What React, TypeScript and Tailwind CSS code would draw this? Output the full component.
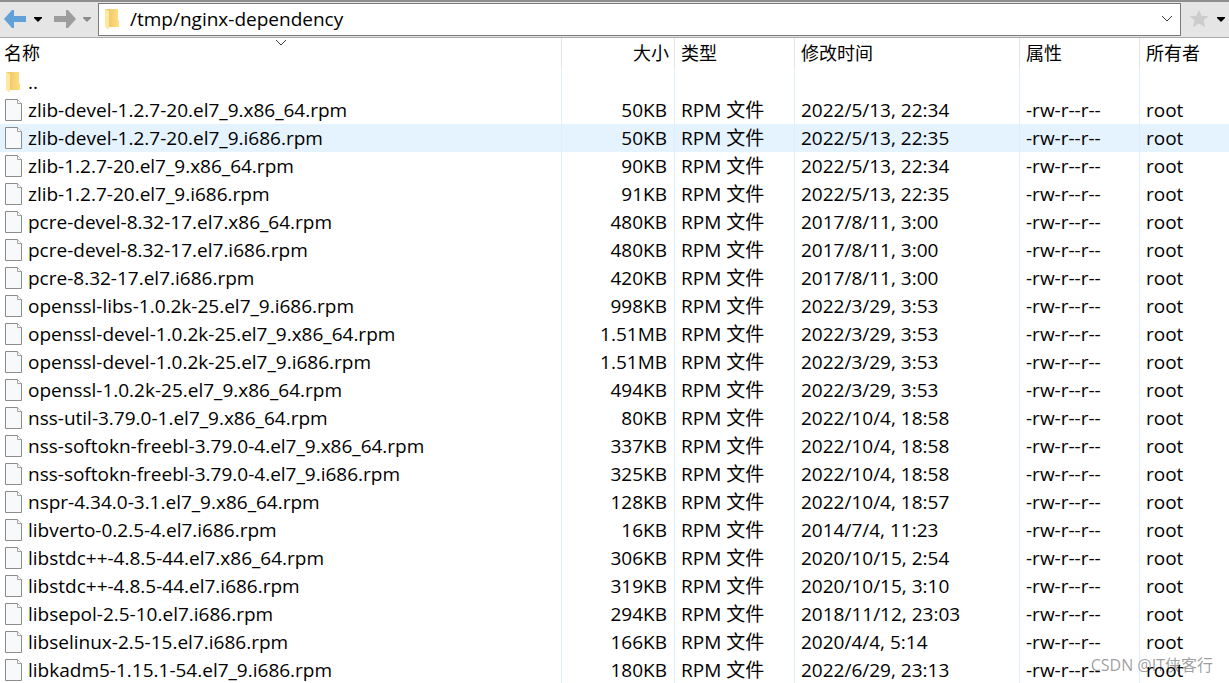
import React from 'react';

interface RemoteFile {
  name: string;
  size: string;
  modified: string;
}

const files: RemoteFile[] = [
  { name: 'zlib-devel-1.2.7-20.el7_9.x86_64.rpm', size: '50KB', modified: '2022/5/13, 22:34' },
  { name: 'zlib-devel-1.2.7-20.el7_9.i686.rpm', size: '50KB', modified: '2022/5/13, 22:35' },
  { name: 'zlib-1.2.7-20.el7_9.x86_64.rpm', size: '90KB', modified: '2022/5/13, 22:34' },
  { name: 'zlib-1.2.7-20.el7_9.i686.rpm', size: '91KB', modified: '2022/5/13, 22:35' },
  { name: 'pcre-devel-8.32-17.el7.x86_64.rpm', size: '480KB', modified: '2017/8/11, 3:00' },
  { name: 'pcre-devel-8.32-17.el7.i686.rpm', size: '480KB', modified: '2017/8/11, 3:00' },
  { name: 'pcre-8.32-17.el7.i686.rpm', size: '420KB', modified: '2017/8/11, 3:00' },
  { name: 'openssl-libs-1.0.2k-25.el7_9.i686.rpm', size: '998KB', modified: '2022/3/29, 3:53' },
  { name: 'openssl-devel-1.0.2k-25.el7_9.x86_64.rpm', size: '1.51MB', modified: '2022/3/29, 3:53' },
  { name: 'openssl-devel-1.0.2k-25.el7_9.i686.rpm', size: '1.51MB', modified: '2022/3/29, 3:53' },
  { name: 'openssl-1.0.2k-25.el7_9.x86_64.rpm', size: '494KB', modified: '2022/3/29, 3:53' },
  { name: 'nss-util-3.79.0-1.el7_9.x86_64.rpm', size: '80KB', modified: '2022/10/4, 18:58' },
  { name: 'nss-softokn-freebl-3.79.0-4.el7_9.x86_64.rpm', size: '337KB', modified: '2022/10/4, 18:58' },
  { name: 'nss-softokn-freebl-3.79.0-4.el7_9.i686.rpm', size: '325KB', modified: '2022/10/4, 18:58' },
  { name: 'nspr-4.34.0-3.1.el7_9.x86_64.rpm', size: '128KB', modified: '2022/10/4, 18:57' },
  { name: 'libverto-0.2.5-4.el7.i686.rpm', size: '16KB', modified: '2014/7/4, 11:23' },
  { name: 'libstdc++-4.8.5-44.el7.x86_64.rpm', size: '306KB', modified: '2020/10/15, 2:54' },
  { name: 'libstdc++-4.8.5-44.el7.i686.rpm', size: '319KB', modified: '2020/10/15, 3:10' },
  { name: 'libsepol-2.5-10.el7.i686.rpm', size: '294KB', modified: '2018/11/12, 23:03' },
  { name: 'libselinux-2.5-15.el7.i686.rpm', size: '166KB', modified: '2020/4/4, 5:14' },
  { name: 'libkadm5-1.15.1-54.el7_9.i686.rpm', size: '180KB', modified: '2022/6/29, 23:13' },
];

const HOVERED = 1;

const FolderIcon = () => (
  <svg className="w-4 h-6 shrink-0" viewBox="0 0 16 24" aria-hidden="true">
    <defs>
      <linearGradient id="folder-body">
        <stop offset="0.3" stopColor="#f0cb6c" />
        <stop offset="1" stopColor="#ffdf80" />
      </linearGradient>
    </defs>
    <path d="M1 2H14V13L15 14V20H5Z" fill="url(#folder-body)" />
    <path d="M1 2L5 4V22L4 22.500L1 20Z" fill="#ffe8a2" />
  </svg>
);

const FileIcon = () => (
  <svg className="w-[18px] h-6 shrink-0" viewBox="0 0 18 24" aria-hidden="true">
    <path d="M1.500 1.500H13.500L17.500 5.500V22.500H1.500Z" fill="#f7f9fa" stroke="#8c8c8c" />
    <path d="M13.500 1.500V5.500H17.500" fill="#ffffff" stroke="#a0a0a0" />
  </svg>
);

const ArrowIcon = ({ flip = false }: { flip?: boolean }) => (
  <svg className={flip ? 'w-6 h-5 rotate-180' : 'w-6 h-5'} viewBox="0 0 24 20" fill="currentColor" aria-hidden="true">
    <path d="M1 10L9 1H11V7H23V13H11V19H9Z" />
  </svg>
);

const Caret = () => (
  <svg className="w-2 h-5" viewBox="0 0 8 20" fill="currentColor" aria-hidden="true">
    <path d="M0 8H8V9L4 13L0 9Z" />
  </svg>
);

const Chevron = () => (
  <svg className="w-3 h-2" viewBox="0 0 12 8" fill="none" stroke="#404040" aria-hidden="true">
    <path d="M1 1L6 6L11 1" />
  </svg>
);

const th = 'h-[30px] p-0 font-normal text-left border-r border-[#e5e5e5] px-[6px] whitespace-nowrap';
const td = 'h-7 p-0 border-r border-[#d9ebfa]/80 pl-[6px] pr-[7px] whitespace-nowrap';

export default function App() {
  return (
    <div className="relative h-screen flex flex-col overflow-hidden bg-white text-black text-[19px] leading-7 font-['Open_Sans','Noto_Sans_CJK_SC',sans-serif]">
      {/* Toolbar */}
      <header className="flex items-center shrink-0 h-[38px] border-t-2 border-t-[#8e8e8e] border-b border-b-[#ababab] bg-[#e5e5e5]">
        <div className="flex items-center w-[98px] shrink-0 pl-[3px] pb-[2px]">
          <button aria-label="Back" className="text-[#62a1d8]"><ArrowIcon /></button>
          <button aria-label="Back history" className="ml-[7px]"><Caret /></button>
          <button aria-label="Forward" className="ml-[11px] text-[#9d9d9d]"><ArrowIcon flip /></button>
          <button aria-label="Forward history" className="ml-[6px] text-[#8a8a8a]"><Caret /></button>
        </div>
        <div className="flex flex-1 items-center h-[33px] border border-[#7a7a7a] bg-white pl-[5px] pr-[7px] pb-[2px]">
          <FolderIcon />
          <input
            aria-label="Remote path"
            className="flex-1 min-w-0 ml-[10px] h-7 outline-none"
            defaultValue="/tmp/nginx-dependency"
          />
          <button aria-label="Show recent paths"><Chevron /></button>
        </div>
        <div className="flex items-center w-12 shrink-0 pl-[7px] pb-[2px]">
          <button aria-label="Bookmarks" className="text-[#cccccc]">
            <svg className="w-[22px] h-5" viewBox="0 0 22 20" fill="currentColor" aria-hidden="true">
              <path d="M11 1L13.800 7H20.500L15.500 11.300L17 18L11 14.500L5 18L6.500 11.300L1.500 7H8.200Z" />
            </svg>
          </button>
          <button aria-label="Bookmark list" className="ml-[7px]"><Caret /></button>
        </div>
      </header>

      {/* File list */}
      <table className="w-full table-fixed border-separate border-spacing-0">
        <colgroup>
          <col />
          <col className="w-[113px]" />
          <col className="w-[120px]" />
          <col className="w-[225px]" />
          <col className="w-[120px]" />
          <col className="w-[89px]" />
        </colgroup>
        <thead className="text-[18px]">
          <tr>
            <th className="relative h-[30px] p-0 pl-1 font-normal text-left border-r border-[#e5e5e5]">
              名称
              <span className="absolute top-0 inset-x-0 flex justify-center pt-px"><Chevron /></span>
            </th>
            <th className="h-[30px] p-0 pr-[5px] font-normal text-right border-r border-[#e5e5e5]">大小</th>
            <th className={th}>类型</th>
            <th className={th}>修改时间</th>
            <th className={th}>属性</th>
            <th className="h-[30px] p-0 pl-[6px] font-normal text-left">所有者</th>
          </tr>
        </thead>
        <tbody>
          <tr>
            <td className="h-7 p-0 pl-[5px] border-r border-[#d9ebfa]/80">
              <div className="flex items-center">
                <FolderIcon />
                <span className="ml-[7px]">..</span>
              </div>
            </td>
            <td className={td} />
            <td className={td} />
            <td className={td} />
            <td className={td} />
            <td className="h-7 p-0" />
          </tr>
          {files.map((file, index) => (
            <tr key={file.name} className={index === HOVERED ? 'bg-[#e5f3ff]' : ''}>
              <td className="h-7 p-0 pl-1 border-r border-[#d9ebfa]/80">
                <div className="flex items-center">
                  <FileIcon />
                  <span className="ml-[6px] whitespace-nowrap">{file.name}</span>
                </div>
              </td>
              <td className={`${td} text-right`}>{file.size}</td>
              <td className={td}>RPM 文件</td>
              <td className={td}>{file.modified}</td>
              <td className={td}>-rw-r--r--</td>
              <td className="h-7 p-0 pl-[6px]">root</td>
            </tr>
          ))}
        </tbody>
      </table>

      {/* Watermark */}
      <div className="absolute bottom-1 right-4 text-[16px] text-black/40 pointer-events-none">
        CSDN @IT侠客行
      </div>
    </div>
  );
}
